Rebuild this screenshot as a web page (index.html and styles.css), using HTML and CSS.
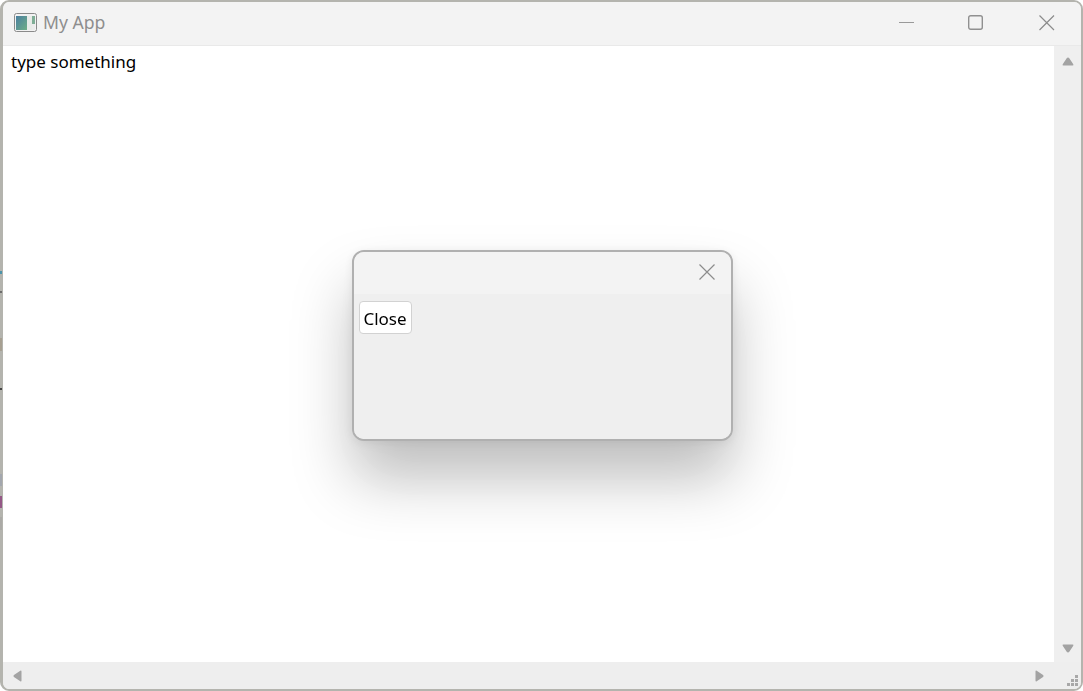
FILE: index.html
```html
<!DOCTYPE html>
<html lang="en">
<head>
<meta charset="utf-8">
<title>My App</title>
<link rel="stylesheet" href="styles.css">
</head>
<body>
<div class="window">
  <header class="titlebar">
    <svg class="app-icon" width="23" height="19" viewBox="0 0 23 19">
      <defs><linearGradient id="g" x1="0" y1="0" x2="1" y2="1"><stop offset="0" stop-color="#4a7fa0"/><stop offset="1" stop-color="#6fae86"/></linearGradient></defs>
      <rect x="0.5" y="0.5" width="22" height="18" rx="2" fill="#f2f2f2" stroke="#8a8a8a"/>
      <rect x="2" y="3" width="11" height="14" fill="url(#g)"/>
      <rect x="13" y="3" width="5" height="14" fill="#e8ebe8"/>
      <rect x="18" y="3" width="3" height="8" fill="#7fae96"/>
      <rect x="18" y="11" width="3" height="6" fill="#ececec"/>
    </svg>
    <span class="title">My App</span>
    <div class="controls">
      <button class="ctl ctl-min"><svg width="16" height="16" viewBox="0 0 16 16"><path d="M0 7.500h15" stroke="#999" fill="none"/></svg></button>
      <button class="ctl ctl-max"><svg width="16" height="16" viewBox="0 0 16 16"><rect x=".7" y=".7" width="13.600" height="13.600" rx="2" stroke="#909090" stroke-width="1.400" fill="none"/></svg></button>
      <button class="ctl ctl-close"><svg width="16" height="16" viewBox="0 0 16 16"><path d="M.5.500l14.500 14.500M15 .5l-14.500 14.500" stroke="#8c8c8c" stroke-width="1.200" fill="none"/></svg></button>
    </div>
  </header>
  <div class="client">
    <div class="main">
      <div class="content">type something</div>
      <div class="vscroll">
        <svg class="arrow" width="12" height="9" viewBox="0 0 12 9"><path d="M6 .5q.8 0 1.300.8l4 6q.6 1.200-.8 1.200H1.500q-1.400 0-.8-1.200l4-6Q5.200.5 6 .5z" fill="#a3a3a3"/></svg>
        <svg class="arrow" width="12" height="9" viewBox="0 0 12 9"><path d="M6 8.500q.8 0 1.300-.8l4-6Q11.900.5 10.500.5H1.500Q.1.5.7 1.700l4 6q.5.8 1.300.8z" fill="#a3a3a3"/></svg>
      </div>
    </div>
    <div class="hscroll">
      <svg class="arrow" width="9" height="12" viewBox="0 0 9 12"><path d="M.5 6q0-.8.800-1.300l6-4Q8.500.1 8.500 1.500v9q0 1.400-1.200.8l-6-4Q.5 6.800.5 6z" fill="#a3a3a3"/></svg>
      <svg class="arrow" width="9" height="12" viewBox="0 0 9 12"><path d="M8.500 6q0-.8-.8-1.300l-6-4Q.5.100.5 1.500v9q0 1.400 1.200.8l6-4q.8-.5.800-1.300z" fill="#a3a3a3"/></svg>
      <div class="grip"><i></i><i></i><i></i><i></i><i></i><i></i></div>
    </div>
  </div>
  <div class="overlay">
    <section class="dialog">
      <div class="dialog-head">
        <svg width="16" height="16" viewBox="0 0 16 16"><path d="M.5.500l15 15M15.500.5l-15 15" stroke="#8c8c8c" stroke-width="1.200" fill="none"/></svg>
      </div>
      <div class="dialog-body"><button class="btn">Close</button></div>
    </section>
  </div>
</div>
<div class="desktop-marks">
  <i class="mark m1"></i><i class="mark m2"></i><i class="mark m3"></i><i class="mark m4"></i><i class="mark m5"></i><i class="mark m6"></i><i class="mark m7"></i>
</div>
</body>
</html>
```
FILE: styles.css
```css
* { box-sizing: border-box; }
html, body { margin: 0; height: 100%; background: #fff; overflow: hidden; }
body { font-family: "Noto Sans", "Open Sans", sans-serif; }

.desktop-marks { position: absolute; left: 0; top: 0; width: 2px; height: 691px; }
.mark { position: absolute; left: 0; width: 2px; opacity: .75; }
.m1 { top: 271px; height: 3px; background: #2b8aa8; }
.m2 { top: 291px; height: 2px; background: #555; }
.m3 { top: 338px; height: 13px; background: #a39a88; }
.m4 { top: 388px; height: 2px; background: #222; }
.m5 { top: 474px; height: 12px; background: #9da3ad; }
.m6 { top: 496px; height: 12px; background: #8a3a78; }
.m7 { top: 517px; height: 13px; background: #a8a7a3; }

.window {
  position: relative;
  width: 1083px;
  height: 691px;
  display: flex;
  flex-direction: column;
  border: 2px solid #b4b4ae;
  border-left-width: 3px;
  border-radius: 9px;
  overflow: hidden;
  background: #f3f3f3;
}

.titlebar {
  flex: 0 0 44px;
  display: flex;
  align-items: center;
  padding-left: 11px;
  background: #f3f3f3;
  border-bottom: 1px solid #e9e9e9;
}
.app-icon { margin-top: -2px; margin-right: 6px; }
.title { font-size: 17.6px; color: #8e8e8e; margin-top: -4px; }
.controls { margin-left: auto; display: flex; align-items: center; padding-right: 26px; margin-top: -2px; }
.ctl { padding: 0; border: 0; background: none; width: 16px; height: 16px; display: block; }
.ctl svg { display: block; }
.ctl-max { margin-left: 53px; margin-right: 55px; }

.client { flex: 1; display: flex; flex-direction: column; min-height: 0; }
.main { flex: 1; display: flex; min-height: 0; }
.content {
  flex: 1;
  background: #fff;
  padding: 4px 8px;
  font-size: 17px;
  line-height: 24px;
  color: #000;
}
.vscroll {
  flex: 0 0 27px;
  background: #efefef;
  display: flex;
  flex-direction: column;
  justify-content: space-between;
  align-items: center;
  padding: 11px 0 9px;
}
.hscroll {
  position: relative;
  flex: 0 0 27px;
  background: #eeeeee;
  display: flex;
  align-items: center;
  justify-content: space-between;
  padding: 0 37px 0 10px;
}
.arrow { display: block; }
.grip {
  position: absolute;
  right: 3px;
  bottom: 3px;
  width: 11px;
  height: 11px;
  display: grid;
  grid-template-columns: repeat(3, 3px);
  grid-auto-rows: 3px;
  gap: 1px;
  justify-content: end;
  align-content: end;
}
.grip i { background: #a8a8a8; }
.grip i:nth-child(1) { grid-column: 3; }
.grip i:nth-child(2) { grid-column: 2; }
.grip i:nth-child(4) { grid-column: 1; }

.overlay {
  position: absolute;
  inset: 0;
  display: flex;
  align-items: center;
  justify-content: center;
  filter: drop-shadow(0 38px 30px rgba(0,0,0,.24)) drop-shadow(0 2px 5px rgba(0,0,0,.08));
}
.dialog {
  width: 381px;
  height: 191px;
  border: 2px solid #b0b0b0;
  border-radius: 12px;
  overflow: hidden;
  display: flex;
  flex-direction: column;
  background: #efefef;
}
.dialog-head {
  flex: 0 0 42px;
  background: #f3f3f3;
  display: flex;
  align-items: center;
  justify-content: flex-end;
  padding: 0 16px 2px 0;
}
.dialog-body { flex: 1; padding: 7px 5px; background: #efefef; }
.btn {
  display: block;
  width: 53px;
  height: 33px;
  padding: 1px 0 0;
  background: #fff;
  border: 1px solid #d2d2d2;
  border-radius: 4px;
  font: 17px "Noto Sans", "Open Sans", sans-serif;
  color: #000;
}
```
